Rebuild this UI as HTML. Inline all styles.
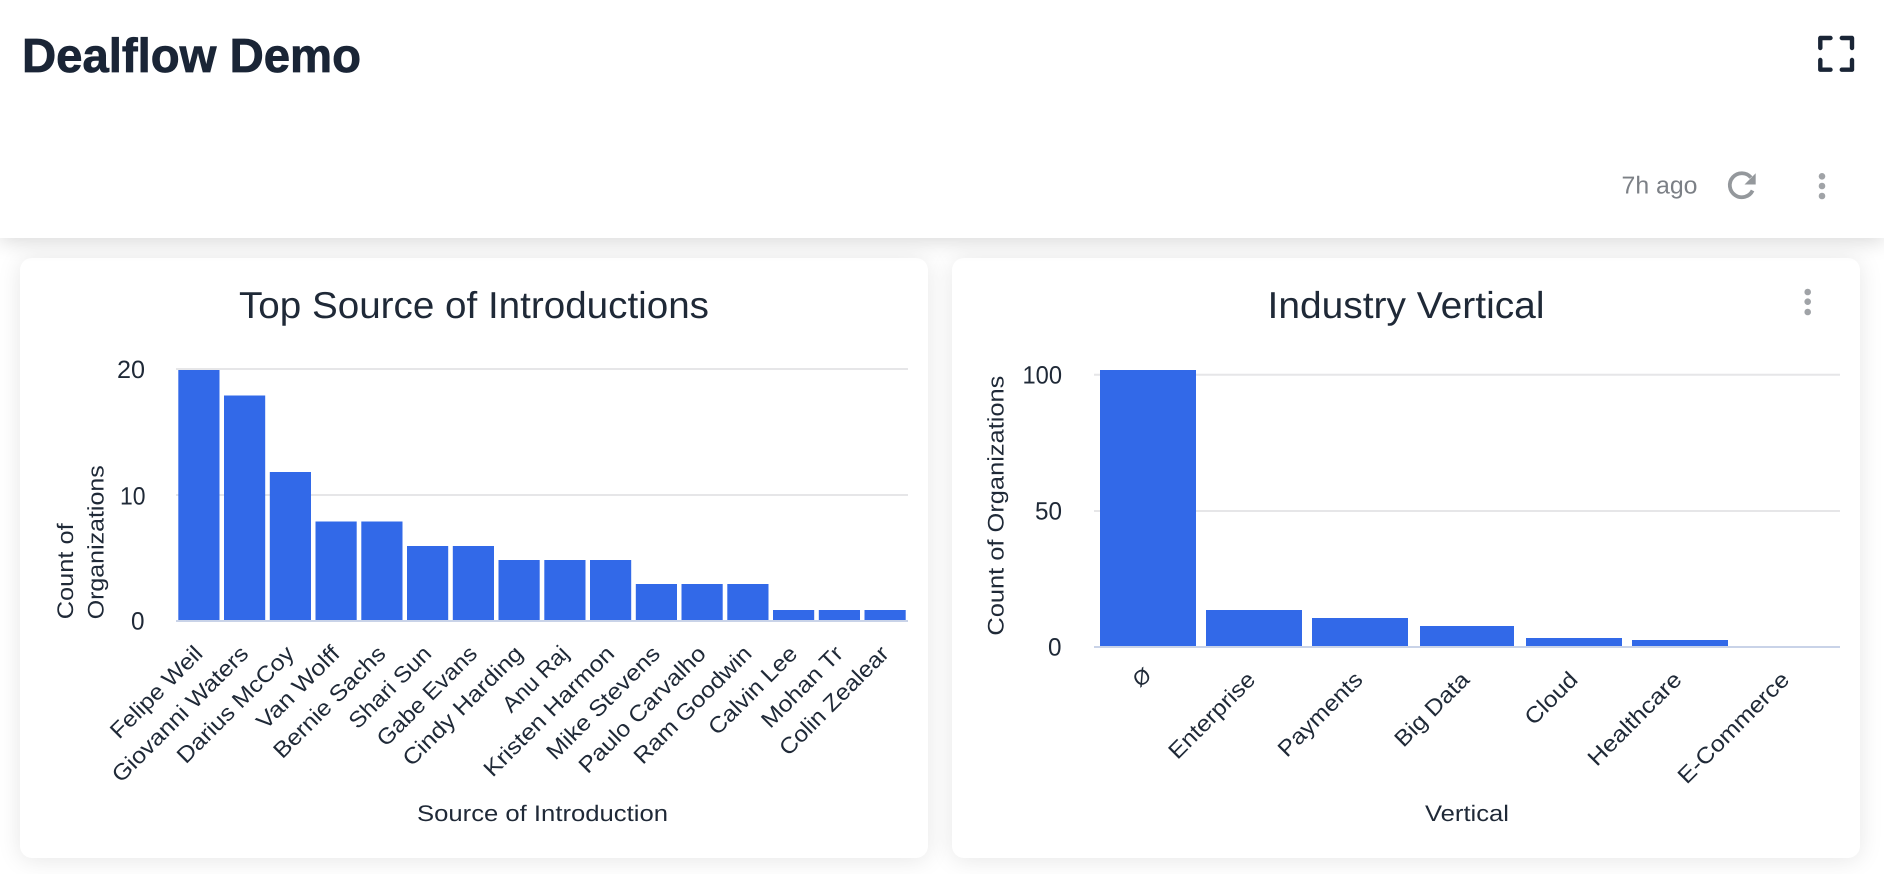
<!DOCTYPE html>
<html><head><meta charset="utf-8"><title>Dealflow Demo</title>
<style>
html,body{margin:0;padding:0;width:1884px;height:874px;overflow:hidden;background:#fff;}
body{position:relative;font-family:"Liberation Sans",sans-serif;}
.hdr{position:absolute;left:0;top:0;width:1884px;height:238px;background:#fff;box-shadow:0 3px 20px rgba(0,0,0,.16);z-index:2;}
.card{position:absolute;top:258px;height:599.5px;background:#fff;border-radius:12px;box-shadow:0 2px 24px rgba(0,0,0,.1);}
svg{position:absolute;left:0;top:0;z-index:3;}
text{font-family:"Liberation Sans",sans-serif;fill:#1f2937;text-rendering:geometricPrecision;}
.l{font-size:22.5px;text-anchor:end;}
.t{font-size:37.5px;}
.a{font-size:22.5px;}
.n{font-size:25px;}
.b{fill:#3269e8;}
.g{stroke:#e6e6e8;stroke-width:2;}
.x{stroke:#c9d3e8;stroke-width:2;}
.k{fill:#a0a3a7;}
</style></head><body>
<div class="hdr"></div>
<div class="card" style="left:20px;width:908px"></div>
<div class="card" style="left:952px;width:908px"></div>
<svg width="1884" height="874" viewBox="0 0 1884 874" xmlns="http://www.w3.org/2000/svg">
<text x="22" y="72" textLength="339" lengthAdjust="spacingAndGlyphs" style="font-size:48px;font-weight:700;fill:#1a2536;stroke:#1a2536;stroke-width:.8px">Dealflow Demo</text>
<path d="M1820.3 48V38H1830.5M1841.8 38H1852V48M1852 60V69.7H1841.8M1830.5 69.7H1820.3V60" fill="none" stroke="#1a2536" stroke-width="4.4" stroke-linecap="round" stroke-linejoin="round"/>
<text x="1621.5" y="193.7" textLength="76" lengthAdjust="spacingAndGlyphs" style="font-size:24.5px;fill:#7c8086">7h ago</text>
<path d="M1751 177.5A12 12 0 1 0 1752.6 190.5" fill="none" stroke="#94989c" stroke-width="3.8"/>
<path d="M1755.7 173.3V184.5H1744.5Z" fill="#94989c"/>
<circle class="k" cx="1822" cy="176.3" r="3.3"/><circle class="k" cx="1822" cy="186" r="3.3"/><circle class="k" cx="1822" cy="196" r="3.3"/>
<circle class="k" cx="1807.7" cy="292" r="3.3"/><circle class="k" cx="1807.7" cy="301.7" r="3.3"/><circle class="k" cx="1807.7" cy="312" r="3.3"/>

<text class="t" x="239" y="318" textLength="470" lengthAdjust="spacingAndGlyphs">Top Source of Introductions</text>
<text class="t" x="1267.5" y="318" textLength="277" lengthAdjust="spacingAndGlyphs">Industry Vertical</text>

<!-- chart 1 -->
<line class="g" x1="176" x2="908" y1="369" y2="369"/>
<line class="g" x1="176" x2="908" y1="495" y2="495"/>
<line class="x" x1="176" x2="908" y1="621" y2="621"/>
<rect class="b" x="178.3" y="370" width="41.2" height="250"/>
<rect class="b" x="224" y="395.5" width="41.2" height="224.5"/>
<rect class="b" x="269.8" y="472" width="41.2" height="148"/>
<rect class="b" x="315.5" y="521.5" width="41.2" height="98.5"/>
<rect class="b" x="361.3" y="521.5" width="41.2" height="98.5"/>
<rect class="b" x="407" y="546" width="41.2" height="74"/>
<rect class="b" x="452.8" y="546" width="41.2" height="74"/>
<rect class="b" x="498.5" y="560" width="41.2" height="60"/>
<rect class="b" x="544.3" y="560" width="41.2" height="60"/>
<rect class="b" x="590" y="560" width="41.2" height="60"/>
<rect class="b" x="635.8" y="584" width="41.2" height="36"/>
<rect class="b" x="681.5" y="584" width="41.2" height="36"/>
<rect class="b" x="727.3" y="584" width="41.2" height="36"/>
<rect class="b" x="773" y="610" width="41.2" height="10"/>
<rect class="b" x="818.8" y="610" width="41.2" height="10"/>
<rect class="b" x="864.5" y="610" width="41.2" height="10"/>

<text class="n" x="117" y="378" textLength="28" lengthAdjust="spacingAndGlyphs">20</text>
<text class="n" x="120" y="504.5" textLength="25.5" lengthAdjust="spacingAndGlyphs">10</text>
<text class="n" x="131" y="629.5" textLength="13.5" lengthAdjust="spacingAndGlyphs">0</text>
<text class="a" transform="translate(72.8 619.3) rotate(-90)" textLength="96" lengthAdjust="spacingAndGlyphs">Count of</text>
<text class="a" transform="translate(103.3 619.3) rotate(-90)" textLength="154" lengthAdjust="spacingAndGlyphs">Organizations</text>
<text class="a" x="417" y="821" textLength="251" lengthAdjust="spacingAndGlyphs">Source of Introduction</text>

<text class="l" transform="translate(204 655) rotate(-45)" textLength="120" lengthAdjust="spacingAndGlyphs">Felipe Weil</text>
<text class="l" transform="translate(249.7 655) rotate(-45)" textLength="182" lengthAdjust="spacingAndGlyphs">Giovanni Waters</text>
<text class="l" transform="translate(295.5 655) rotate(-45)" textLength="155" lengthAdjust="spacingAndGlyphs">Darius McCoy</text>
<text class="l" transform="translate(341.2 655) rotate(-45)" textLength="107" lengthAdjust="spacingAndGlyphs">Van Wolff</text>
<text class="l" transform="translate(387 655) rotate(-45)" textLength="148" lengthAdjust="spacingAndGlyphs">Bernie Sachs</text>
<text class="l" transform="translate(432.7 655) rotate(-45)" textLength="106" lengthAdjust="spacingAndGlyphs">Shari Sun</text>
<text class="l" transform="translate(478.5 655) rotate(-45)" textLength="131" lengthAdjust="spacingAndGlyphs">Gabe Evans</text>
<text class="l" transform="translate(524.2 655) rotate(-45)" textLength="159" lengthAdjust="spacingAndGlyphs">Cindy Harding</text>
<text class="l" transform="translate(570 655) rotate(-45)" textLength="83" lengthAdjust="spacingAndGlyphs">Anu Raj</text>
<text class="l" transform="translate(615.7 655) rotate(-45)" textLength="174" lengthAdjust="spacingAndGlyphs">Kristen Harmon</text>
<text class="l" transform="translate(661.5 655) rotate(-45)" textLength="150" lengthAdjust="spacingAndGlyphs">Mike Stevens</text>
<text class="l" transform="translate(707.2 655) rotate(-45)" textLength="169" lengthAdjust="spacingAndGlyphs">Paulo Carvalho</text>
<text class="l" transform="translate(753 655) rotate(-45)" textLength="156" lengthAdjust="spacingAndGlyphs">Ram Goodwin</text>
<text class="l" transform="translate(798.7 655) rotate(-45)" textLength="115" lengthAdjust="spacingAndGlyphs">Calvin Lee</text>
<text class="l" transform="translate(844.5 655) rotate(-45)" textLength="105" lengthAdjust="spacingAndGlyphs">Mohan Tr</text>
<text class="l" transform="translate(890.2 655) rotate(-45)" textLength="144" lengthAdjust="spacingAndGlyphs">Colin Zealear</text>

<!-- chart 2 -->
<line class="g" x1="1094" x2="1840" y1="374.7" y2="374.7"/>
<line class="g" x1="1094" x2="1840" y1="511" y2="511"/>
<line class="x" x1="1094" x2="1840" y1="647" y2="647"/>
<rect class="b" x="1100" y="370" width="96" height="276"/>
<rect class="b" x="1206" y="610" width="96" height="36"/>
<rect class="b" x="1312" y="618" width="96" height="28"/>
<rect class="b" x="1420" y="626" width="94" height="20"/>
<rect class="b" x="1526" y="638" width="96" height="8"/>
<rect class="b" x="1632" y="640" width="96" height="6"/>

<text class="n" x="1022.5" y="383.6" textLength="39.5" lengthAdjust="spacingAndGlyphs">100</text>
<text class="n" x="1035" y="519.5" textLength="27" lengthAdjust="spacingAndGlyphs">50</text>
<text class="n" x="1048" y="655.7" textLength="13.5" lengthAdjust="spacingAndGlyphs">0</text>
<text class="a" transform="translate(1003.3 635.6) rotate(-90)" textLength="260" lengthAdjust="spacingAndGlyphs">Count of Organizations</text>
<text class="a" x="1425" y="821" textLength="84" lengthAdjust="spacingAndGlyphs">Vertical</text>

<text transform="translate(1141.7 677) rotate(-35)" text-anchor="middle" y="7.5" style="font-size:21px">Ø</text>
<text class="l" transform="translate(1256.7 681) rotate(-45)" textLength="112" lengthAdjust="spacingAndGlyphs">Enterprise</text>
<text class="l" transform="translate(1364 681) rotate(-45)" textLength="109" lengthAdjust="spacingAndGlyphs">Payments</text>
<text class="l" transform="translate(1470.7 681) rotate(-45)" textLength="95" lengthAdjust="spacingAndGlyphs">Big Data</text>
<text class="l" transform="translate(1579 681) rotate(-45)" textLength="64" lengthAdjust="spacingAndGlyphs">Cloud</text>
<text class="l" transform="translate(1683 681) rotate(-45)" textLength="122" lengthAdjust="spacingAndGlyphs">Healthcare</text>
<text class="l" transform="translate(1790.7 681) rotate(-45)" textLength="147" lengthAdjust="spacingAndGlyphs">E-Commerce</text>
</svg>
</body></html>
